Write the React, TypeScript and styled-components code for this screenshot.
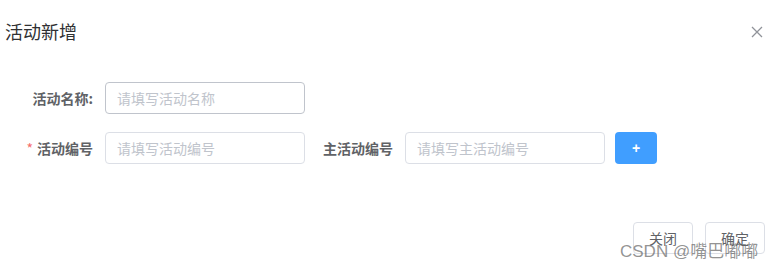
import React from 'react';
import styled, { createGlobalStyle } from 'styled-components';

const GlobalStyle = createGlobalStyle`
    body {
        margin: 0;
        background: #fff;
        font-family: "Noto Sans CJK SC", "Noto Sans", sans-serif;
    }
`;

const Dialog = styled.div`
    position: relative;
    width: 772px;
    height: 272px;
    background: #fff;
    overflow: hidden;
`;

const Header = styled.div`
    display: flex;
    align-items: center;
    justify-content: space-between;
    padding: 19px 9px 0 5px;
    height: 24px;
`;

const Title = styled.span`
    font-size: 18px;
    line-height: 24px;
    color: #303133;
`;

const CloseBtn = styled.button`
    display: flex;
    align-items: center;
    justify-content: center;
    width: 12px;
    height: 12px;
    padding: 0;
    border: none;
    background: transparent;
    cursor: pointer;
    margin-top: 2px;
`;

const Body = styled.div`
    display: flex;
    flex-direction: column;
    gap: 18px;
    padding-top: 39px;
`;

const Row = styled.div`
    display: flex;
    align-items: center;
`;

const Label = styled.label<{ $first?: boolean }>`
    box-sizing: border-box;
    width: ${p => (p.$first ? '105px' : 'auto')};
    margin-left: ${p => (p.$first ? '0' : '18px')};
    padding-right: 12px;
    text-align: right;
    font-size: 14px;
    font-weight: 700;
    line-height: 32px;
    color: #606266;
`;

const Star = styled.span`
    color: #f56c6c;
    margin-right: 4px;
    font-weight: 400;
`;

const Input = styled.input<{ $hover?: boolean }>`
    box-sizing: border-box;
    width: 200px;
    height: 32px;
    padding: 0 11px;
    border: 1px solid ${p => (p.$hover ? '#c0c4cc' : '#dcdfe6')};
    border-radius: 4px;
    font-family: inherit;
    font-size: 14px;
    color: #606266;
    outline: none;
    &::placeholder {
        color: #c0c4cc;
    }
`;

const AddBtn = styled.button`
    width: 42px;
    height: 32px;
    margin-left: 10px;
    border: none;
    border-radius: 4px;
    background: #409eff;
    color: #fff;
    font-size: 14px;
    font-weight: 700;
    font-family: "Liberation Sans", sans-serif;
    cursor: pointer;
`;

const Footer = styled.div`
    display: flex;
    justify-content: flex-end;
    gap: 12px;
    padding: 58px 7px 0 0;
`;

const FootBtn = styled.button`
    box-sizing: border-box;
    width: 60px;
    height: 32px;
    border: 1px solid #dcdfe6;
    border-radius: 4px;
    background: #fff;
    font-family: inherit;
    font-size: 14px;
    line-height: 28px;
    color: #606266;
    cursor: pointer;
`;

// CSDN watermark laid over the footer
const Watermark = styled.div`
    position: absolute;
    left: 620px;
    top: 242px;
    font-family: "Liberation Sans", "Noto Sans CJK SC", sans-serif;
    font-size: 17px;
    line-height: 20px;
    color: rgba(100, 100, 100, 0.7);
    white-space: nowrap;
    pointer-events: none;
`;

const App: React.FC = () => {
    return (
        <>
            <GlobalStyle />
            <Dialog>
                <Header>
                    <Title>活动新增</Title>
                    <CloseBtn aria-label="close">
                        <svg width="12" height="12" viewBox="0 0 12 12">
                            <path d="M1 1L11 11M11 1L1 11" stroke="#909399" strokeWidth="1.3" />
                        </svg>
                    </CloseBtn>
                </Header>
                <Body>
                    <Row>
                        <Label $first>活动名称:</Label>
                        <Input $hover placeholder="请填写活动名称" />
                    </Row>
                    <Row>
                        <Label $first><Star>*</Star>活动编号</Label>
                        <Input placeholder="请填写活动编号" />
                        <Label>主活动编号</Label>
                        <Input placeholder="请填写主活动编号" />
                        <AddBtn>+</AddBtn>
                    </Row>
                </Body>
                <Footer>
                    <FootBtn>关闭</FootBtn>
                    <FootBtn>确定</FootBtn>
                </Footer>
                <Watermark>CSDN @嘴巴嘟嘟</Watermark>
            </Dialog>
        </>
    );
};

export default App;
